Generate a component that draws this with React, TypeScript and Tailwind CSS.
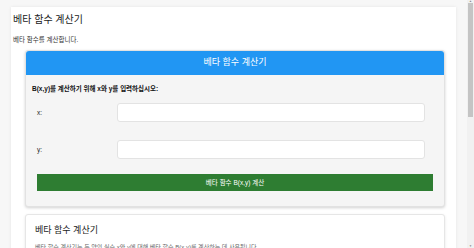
const font = { fontFamily: "'Liberation Sans', 'Noto Sans CJK KR', sans-serif" };

function Field({ label }: { label: string }) {
  return (
    <div className="flex items-center h-[19px] pl-[11px] pr-[19px]">
      <span className="w-[80px] text-[6.5px] text-[#222]">{label}</span>
      <div className="flex-1 h-full bg-white border border-[#e3e3e3] rounded-[3px]" />
    </div>
  );
}

export default function App() {
  return (
    <div className="flex h-[248px] w-[474px] overflow-hidden bg-[#f7f7f7]" style={font}>
      <div className="flex-1 pt-[7px] px-[11px]">
        <div className="bg-white shadow-[0_0_3px_rgba(0,0,0,0.08)] h-[260px]">
          <h1 className="pl-[2px] pt-[6px] text-[10px] leading-[13px] text-[#222]">베타 함수 계산기</h1>
          <p className="pl-[2px] mt-[9px] text-[6.5px] leading-[9px] text-[#333]">베타 함수를 계산합니다.</p>

          <div className="ml-[14px] mr-[11px] mt-[6px] rounded-[3px] shadow-[0_1px_3px_rgba(0,0,0,0.18)] border border-[#e2e2e2] bg-[#f5f5f5]">
            <div className="h-[24px] bg-[#2196f3] rounded-t-[3px] flex items-center justify-center text-white text-[9px]">
              베타 함수 계산기
            </div>
            <div className="pt-[10px] pb-[15px]">
              <p className="pl-[6px] text-[6.5px] leading-[8px] font-bold text-[#111]">
                B(x,y)를 계산하기 위해 x와 y를 입력하십시오:
              </p>
              <div className="mt-[10px]">
                <Field label="x:" />
              </div>
              <div className="mt-[18px]">
                <Field label="y:" />
              </div>
              <div className="mt-[15px] mx-[11px] h-[17px] bg-[#2e7d32] flex items-center justify-center text-white text-[6.5px]">
                베타 함수 B(x,y) 계산
              </div>
            </div>
          </div>

          <div className="ml-[14px] mr-[11px] mt-[7px] rounded-[3px] border border-[#e6e6e6] bg-white shadow-[0_1px_3px_rgba(0,0,0,0.1)] pl-[9px] pt-[9px] pb-[10px]">
            <h2 className="text-[9px] leading-[12px] text-[#222]">베타 함수 계산기</h2>
            <p className="mt-[7px] text-[6px] leading-[9px] text-[#666]">
              베타 함수 계산기는 두 양의 실수 x와 y에 대해 베타 함수 B(x,y)를 계산하는 데 사용됩니다.
            </p>
          </div>
        </div>
      </div>

      <div className="w-[7px] h-full bg-[#f1f1f1] flex flex-col items-center">
        <div className="h-[3px] text-[3px] leading-[3px] text-[#888]">▲</div>
        <div className="w-[5px] h-[114px] bg-[#c4c4c4]" />
        <div className="flex-1" />
        <div className="h-[3px] text-[3px] leading-[3px] text-[#888]">▼</div>
      </div>
    </div>
  );
}
